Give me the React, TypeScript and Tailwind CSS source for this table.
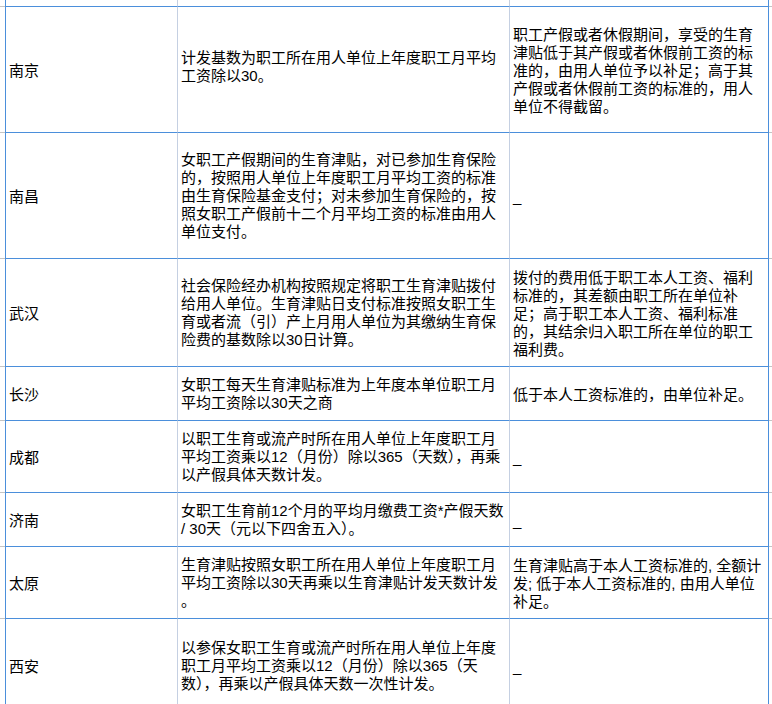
// 生育津贴各城市标准对照表
const font = { fontFamily: '"Liberation Sans", "Noto Sans CJK SC", sans-serif' };

interface Row {
  city: string;
  height: string;
  basisPad?: string;
  basis: string[];
  topUp: string[];
}

const rows: Row[] = [
  {
    city: "南京",
    height: "h-[126px]",
    basisPad: "pb-[6px]",
    basis: ["计发基数为职工所在用人单位上年度职工月平均", "工资除以30。"],
    topUp: [
      "职工产假或者休假期间，享受的生育",
      "津贴低于其产假或者休假前工资的标",
      "准的，由用人单位予以补足；高于其",
      "产假或者休假前工资的标准的，用人",
      "单位不得截留。",
    ],
  },
  {
    city: "南昌",
    height: "h-[126px]",
    basis: [
      "女职工产假期间的生育津贴，对已参加生育保险",
      "的，按照用人单位上年度职工月平均工资的标准",
      "由生育保险基金支付；对未参加生育保险的，按",
      "照女职工产假前十二个月平均工资的标准由用人",
      "单位支付。",
    ],
    topUp: ["_"],
  },
  {
    city: "武汉",
    height: "h-[108px]",
    basis: [
      "社会保险经办机构按照规定将职工生育津贴拨付",
      "给用人单位。生育津贴日支付标准按照女职工生",
      "育或者流（引）产上月用人单位为其缴纳生育保",
      "险费的基数除以30日计算。",
    ],
    topUp: [
      "拨付的费用低于职工本人工资、福利",
      "标准的，其差额由职工所在单位补",
      "足；高于职工本人工资、福利标准",
      "的，其结余归入职工所在单位的职工",
      "福利费。",
    ],
  },
  {
    city: "长沙",
    height: "h-[54px]",
    basis: ["女职工每天生育津贴标准为上年度本单位职工月", "平均工资除以30天之商"],
    topUp: ["低于本人工资标准的，由单位补足。"],
  },
  {
    city: "成都",
    height: "h-[72px]",
    basis: [
      "以职工生育或流产时所在用人单位上年度职工月",
      "平均工资乘以12（月份）除以365（天数），再乘",
      "以产假具体天数计发。",
    ],
    topUp: ["_"],
  },
  {
    city: "济南",
    height: "h-[54px]",
    basis: ["女职工生育前12个月的平均月缴费工资*产假天数", "/ 30天（元以下四舍五入）。"],
    topUp: ["_"],
  },
  {
    city: "太原",
    height: "h-[72px]",
    basis: [
      "生育津贴按照女职工所在用人单位上年度职工月",
      "平均工资除以30天再乘以生育津贴计发天数计发",
      "。",
    ],
    topUp: ["生育津贴高于本人工资标准的, 全额计", "发; 低于本人工资标准的, 由用人单位", "补足。"],
  },
  {
    city: "西安",
    height: "h-[95px]",
    basis: [
      "以参保女职工生育或流产时所在用人单位上年度",
      "职工月平均工资乘以12（月份）除以365（天",
      "数），再乘以产假具体天数一次性计发。",
    ],
    topUp: ["_"],
  },
];

function Lines({ lines }: { lines: string[] }) {
  return (
    <div className="whitespace-nowrap">
      {lines.map((l, i) => (
        <div key={i}>{l}</div>
      ))}
    </div>
  );
}

export default function App() {
  return (
    <div className="h-[704px] w-[772px] overflow-hidden bg-white text-[15px] leading-[18px] text-black" style={font}>
      {/* tail of the previous row */}
      <div className="flex h-[6px]">
        <div className="w-[5px]" />
        <div className="w-[173px] border-l border-r border-l-[#4b8fdb] border-r-[#c5d0e2]" />
        <div className="w-[332px] border-r border-r-[#c5d0e2]" />
        <div className="w-[259px] border-r border-r-[#4b8fdb]" />
        <div className="w-[3px]" />
      </div>

      {rows.map((row) => (
        <div key={row.city} className={`flex shrink-0 ${row.height}`}>
          <div className="w-[5px] shrink-0 border-t border-t-[#c4c4c4]" />
          <div className="flex w-[173px] shrink-0 items-center border-l border-r border-t border-l-[#4b8fdb] border-r-[#c5d0e2] border-t-[#4b8fdb] pl-[3px] pt-[2px]">
            {row.city}
          </div>
          <div className={`flex w-[332px] shrink-0 items-center border-r border-t border-r-[#c5d0e2] border-t-[#4b8fdb] pl-[3px] ${row.basisPad ?? ""}`}>
            <Lines lines={row.basis} />
          </div>
          <div className="flex w-[259px] shrink-0 items-center border-r border-t border-r-[#4b8fdb] border-t-[#4b8fdb] pl-[3px] pt-[2px]">
            <Lines lines={row.topUp} />
          </div>
          <div className="w-[3px] shrink-0 border-t border-t-[#c4c4c4]" />
        </div>
      ))}
    </div>
  );
}
